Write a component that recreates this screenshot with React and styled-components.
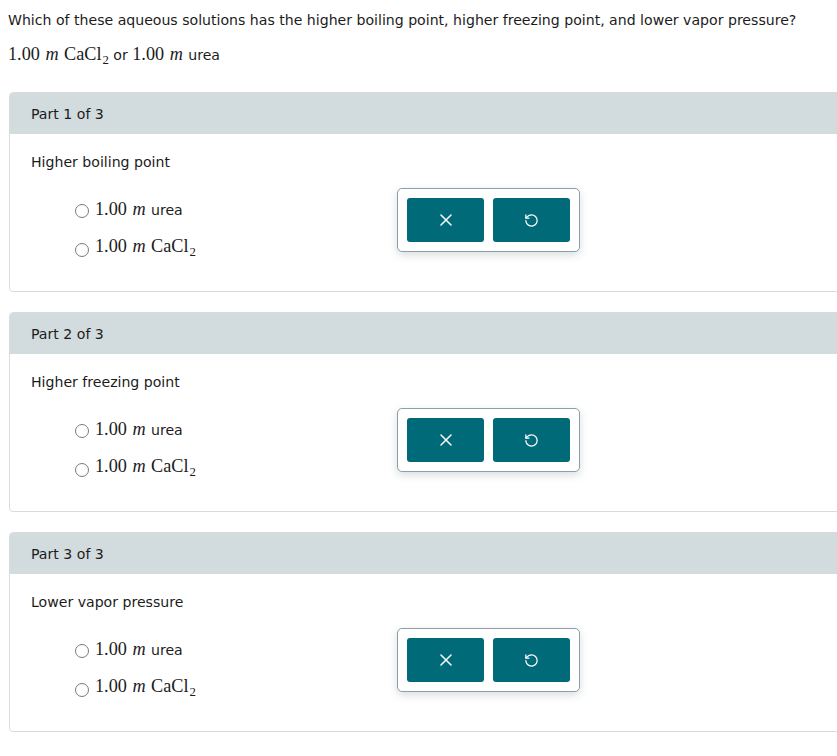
import React from "react";
import styled, { createGlobalStyle } from "styled-components";
import { RotateCcw } from "lucide-react";

const GlobalStyle = createGlobalStyle`
  html, body {
    margin: 0;
    padding: 0;
    background: #ffffff;
    overflow-x: hidden;
  }
  body {
    font-family: "DejaVu Sans", Verdana, sans-serif;
    font-size: 14.1px;
    color: #1b1b1b;
  }
`;

const Page = styled.div`
  padding: 10px 0 20px 8px;
`;

const Question = styled.p`
  margin: 0;
  line-height: 20px;
`;

const Choices = styled.p`
  margin: 12px 0 0;
  line-height: 24px;
`;

const Math = styled.span`
  font-family: "Liberation Serif", "Times New Roman", serif;
  font-size: 18.2px;

  i {
    font-style: italic;
    margin: 0 1px;
  }

  sub {
    font-size: 12.8px;
    vertical-align: -4px;
    line-height: 0;
    margin-left: 1px;
  }
`;

const Parts = styled.div`
  margin-top: 25px;
  margin-left: 1px;
  margin-right: -12px;
  display: flex;
  flex-direction: column;
  gap: 20px;
`;

const Card = styled.section`
  border: 1px solid #d9dcdd;
  border-radius: 4px;
  overflow: hidden;
`;

const CardHeader = styled.header`
  background: #d2dbde;
  height: 41px;
  display: flex;
  align-items: center;
  padding-left: 21px;
`;

const CardBody = styled.div`
  padding: 18px 21px 26px;
`;

const Prompt = styled.div`
  line-height: 20px;
`;

const AnswerRow = styled.div`
  display: flex;
  align-items: flex-start;
  margin-top: 16px;
`;

const Options = styled.div`
  width: 322px;
  margin-left: 44px;
  padding-top: 3px;
  display: flex;
  flex-direction: column;
`;

const Option = styled.label`
  display: flex;
  align-items: center;
  height: 37px;
  gap: 6px;
  cursor: pointer;
`;

const Radio = styled.span`
  width: 12px;
  height: 12px;
  border: 1px solid #7a7a7a;
  border-radius: 50%;
  background: #fff;
  flex: none;
  margin-top: ${({ $low }) => ($low ? "6px" : "2px")};
`;

const Tools = styled.div`
  display: flex;
  gap: 9px;
  padding: 9px;
  border: 1px solid #8d9ea6;
  border-radius: 5px;
  background: #fff;
  box-shadow: 0 3px 8px rgba(40, 70, 80, 0.18);
`;

const ToolButton = styled.button`
  width: 77px;
  height: 44px;
  border: none;
  border-radius: 3px;
  background: #006a79;
  color: #fff;
  display: flex;
  align-items: center;
  justify-content: center;
  padding: 0;
  cursor: pointer;
`;

const Urea = () => (
  <>
    <Math>
      1.00 <i>m</i>
    </Math>{" "}
    urea
  </>
);

const CaCl2 = () => (
  <Math>
    1.00 <i>m</i> CaCl<sub>2</sub>
  </Math>
);

const ClearIcon = () => (
  <svg width="12" height="12" viewBox="0 0 12 12" fill="none">
    <path d="M1 1L11 11M11 1L1 11" stroke="#fff" strokeWidth="1.5" strokeLinecap="round" />
  </svg>
);

const parts = [
  { n: 1, prompt: "Higher boiling point" },
  { n: 2, prompt: "Higher freezing point" },
  { n: 3, prompt: "Lower vapor pressure" },
];

function Part({ n, prompt }) {
  return (
    <Card>
      <CardHeader>Part {n} of 3</CardHeader>
      <CardBody>
        <Prompt>{prompt}</Prompt>
        <AnswerRow>
          <Options>
            <Option>
              <Radio />
              <span>
                <Urea />
              </span>
            </Option>
            <Option>
              <Radio $low />
              <CaCl2 />
            </Option>
          </Options>
          <Tools>
            <ToolButton aria-label="Clear">
              <ClearIcon />
            </ToolButton>
            <ToolButton aria-label="Undo">
              <RotateCcw size={15} strokeWidth={2} color="#fff" />
            </ToolButton>
          </Tools>
        </AnswerRow>
      </CardBody>
    </Card>
  );
}

export default function App() {
  return (
    <>
      <GlobalStyle />
      <Page>
        <Question>
          Which of these aqueous solutions has the higher boiling point, higher
          freezing point, and lower vapor pressure?
        </Question>
        <Choices>
          <CaCl2 /> or <Urea />
        </Choices>
        <Parts>
          {parts.map((p) => (
            <Part key={p.n} {...p} />
          ))}
        </Parts>
      </Page>
    </>
  );
}
